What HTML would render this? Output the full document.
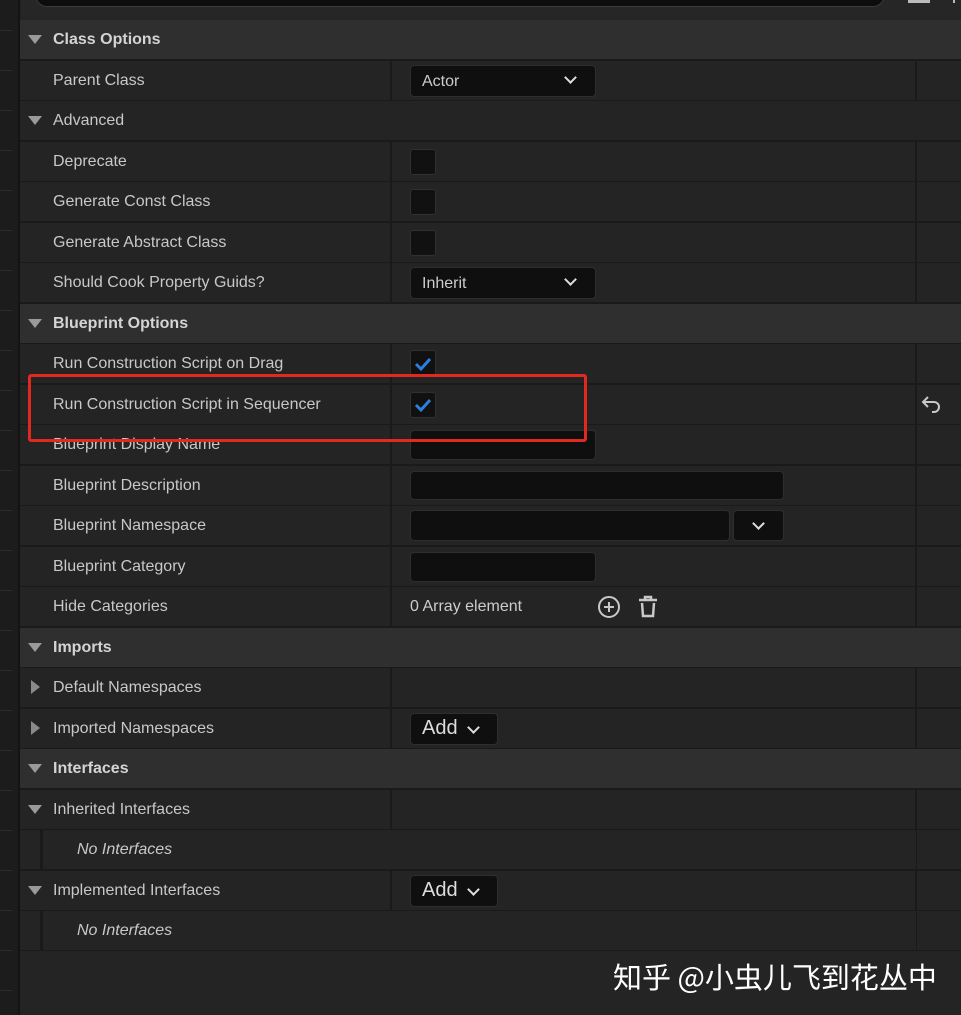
<!DOCTYPE html>
<html><head><meta charset="utf-8"><style>
*{margin:0;padding:0;box-sizing:border-box}
body{width:961px;height:1015px;background:#242424;position:relative;overflow:hidden;font-family:"Liberation Sans","Noto Sans CJK SC",sans-serif;font-size:16px;color:#c8c8c8}
.strip{position:absolute;left:0;top:0;width:20px;height:1015px;background:#1c1c1c;border-right:2px solid #141414}
.tick{position:absolute;left:0;width:12px;height:1px;background:#2c2c2c}
.row{position:absolute;left:20px;width:941px;height:39px;background:#242424}
.hdr{background:#2f2f2f}
.lab{position:absolute;left:33px;top:11px;white-space:nowrap}
.hdr .lab{font-weight:bold;color:#d4d4d4}
.tri{position:absolute;left:8px;top:15px;width:0;height:0;border-left:7px solid transparent;border-right:7px solid transparent;border-top:9px solid #9a9a9a}
.tr{position:absolute;left:11px;top:12px;width:0;height:0;border-top:7px solid transparent;border-bottom:7px solid transparent;border-left:9px solid #8a8a8a}
.d1{position:absolute;left:370px;top:0;width:2px;height:39px;background:#1a1a1a}
.d2{position:absolute;left:895px;top:0;width:2px;height:39px;background:#1a1a1a}
.box{position:absolute;background:#0f0f0f;border:1px solid #2e2e2e;border-radius:4px}
.cb{position:absolute;left:390px;top:7px;width:26px;height:26px;background:#111;border:1px solid #303030;border-radius:3px}
.dd{position:absolute;left:390px;top:4px;width:186px;height:32px;background:#0f0f0f;border:1px solid #2e2e2e;border-radius:4px}
.dd span{position:absolute;left:11px;top:7px;color:#ccc}
.chev{position:absolute;width:9px;height:9px;border-right:2px solid #ddd;border-bottom:2px solid #ddd;transform:rotate(45deg)}
.add{position:absolute;left:390px;top:4px;width:88px;height:32px;background:#0f0f0f;border:1px solid #2e2e2e;border-radius:4px}
.add span{position:absolute;left:11px;top:3px;font-size:20px;color:#ddd}
.sub{position:absolute;left:43px;width:873px;height:39px;background:#242424}
.sub i{position:absolute;left:34px;top:11px;color:#c8c8c8}
</style></head><body>
<div class="strip">
<div class="tick" style="top:30px"></div><div class="tick" style="top:70px"></div><div class="tick" style="top:110px"></div><div class="tick" style="top:150px"></div><div class="tick" style="top:190px"></div><div class="tick" style="top:230px"></div><div class="tick" style="top:270px"></div><div class="tick" style="top:310px"></div><div class="tick" style="top:350px"></div><div class="tick" style="top:390px"></div><div class="tick" style="top:430px"></div><div class="tick" style="top:470px"></div><div class="tick" style="top:510px"></div><div class="tick" style="top:550px"></div><div class="tick" style="top:590px"></div><div class="tick" style="top:630px"></div><div class="tick" style="top:670px"></div><div class="tick" style="top:710px"></div><div class="tick" style="top:750px"></div><div class="tick" style="top:790px"></div><div class="tick" style="top:830px"></div><div class="tick" style="top:870px"></div><div class="tick" style="top:910px"></div><div class="tick" style="top:950px"></div><div class="tick" style="top:990px"></div>
</div>
<div style="position:absolute;left:22px;top:0;width:939px;height:20px;background:#262626"></div>
<div style="position:absolute;left:35px;top:-20px;width:850px;height:27px;background:#0d0d0d;border:1px solid #3a3a3a;border-radius:12px"></div>
<div style="position:absolute;left:908px;top:0;width:22px;height:3px;background:#bbb"></div>
<div style="position:absolute;left:953px;top:0;width:2px;height:3px;background:#bbb"></div>
<div style="position:absolute;left:20px;top:20px;width:941px;height:931px;background:#1a1a1a"></div>

<div class="row hdr" style="top:20px"><div class="tri"></div><div class="lab">Class Options</div></div>
<div class="row" style="top:61px"><div class="lab">Parent Class</div><div class="d1"></div><div class="d2"></div><div class="dd"><span>Actor</span><div class="chev" style="left:155px;top:7px"></div></div></div>
<div class="row" style="top:101px"><div class="tri"></div><div class="lab">Advanced</div></div>
<div class="row" style="top:142px"><div class="lab">Deprecate</div><div class="d1"></div><div class="d2"></div><div class="cb"></div></div>
<div class="row" style="top:182px"><div class="lab">Generate Const Class</div><div class="d1"></div><div class="d2"></div><div class="cb"></div></div>
<div class="row" style="top:223px"><div class="lab">Generate Abstract Class</div><div class="d1"></div><div class="d2"></div><div class="cb"></div></div>
<div class="row" style="top:263px"><div class="lab">Should Cook Property Guids?</div><div class="d1"></div><div class="d2"></div><div class="dd"><span>Inherit</span><div class="chev" style="left:155px;top:7px"></div></div></div>
<div class="row hdr" style="top:304px"><div class="tri"></div><div class="lab">Blueprint Options</div></div>
<div class="row" style="top:344px"><div class="lab">Run Construction Script on Drag</div><div class="d1"></div><div class="d2"></div><div class="cb" style="top:6px"><svg width="24" height="24" style="position:absolute;left:0;top:1px"><path d="M5 12 L10 17 L19 7" stroke="#2a7fe0" stroke-width="3" fill="none"/></svg></div></div>
<div class="row" style="top:385px"><div class="lab">Run Construction Script in Sequencer</div><div class="d1"></div><div class="d2"></div><div class="cb"><svg width="24" height="24" style="position:absolute;left:0;top:0"><path d="M5 12 L10 17 L19 7" stroke="#2a7fe0" stroke-width="3" fill="none"/></svg></div>
<svg width="22" height="20" style="position:absolute;left:901px;top:9px"><path d="M7 3 L2 8 L7 13 M2 8 H13 A5 5 0 0 1 13 18 H11" stroke="#c8c8c8" stroke-width="2" fill="none"/></svg></div>
<div class="row" style="top:425px"><div class="lab">Blueprint Display Name</div><div class="d1"></div><div class="d2"></div><div class="box" style="left:390px;top:5px;width:186px;height:30px"></div></div>
<div class="row" style="top:466px"><div class="lab">Blueprint Description</div><div class="d1"></div><div class="d2"></div><div class="box" style="left:390px;top:5px;width:374px;height:29px"></div></div>
<div class="row" style="top:506px"><div class="lab">Blueprint Namespace</div><div class="d1"></div><div class="d2"></div><div class="box" style="left:390px;top:4px;width:320px;height:31px"></div><div class="box" style="left:713px;top:4px;width:51px;height:31px"><div class="chev" style="left:20px;top:8px"></div></div></div>
<div class="row" style="top:547px"><div class="lab">Blueprint Category</div><div class="d1"></div><div class="d2"></div><div class="box" style="left:390px;top:5px;width:186px;height:30px"></div></div>
<div class="row" style="top:587px"><div class="lab">Hide Categories</div><div class="d1"></div><div class="d2"></div><div style="position:absolute;left:390px;top:11px;color:#ccc">0 Array element</div>
<svg width="26" height="26" style="position:absolute;left:576px;top:7px"><circle cx="13" cy="13" r="10" stroke="#c8c8c8" stroke-width="2" fill="none"/><path d="M13 8 V18 M8 13 H18" stroke="#c8c8c8" stroke-width="2"/></svg>
<svg width="24" height="26" style="position:absolute;left:616px;top:6px"><path d="M3 7 H21 M9 7 V4 H15 V7 M6 10 L7 23 H17 L18 10" stroke="#c8c8c8" stroke-width="2.5" fill="none"/></svg></div>
<div class="row hdr" style="top:628px"><div class="tri"></div><div class="lab">Imports</div></div>
<div class="row" style="top:668px"><div class="tr"></div><div class="lab">Default Namespaces</div><div class="d1"></div><div class="d2"></div></div>
<div class="row" style="top:709px"><div class="tr"></div><div class="lab">Imported Namespaces</div><div class="d1"></div><div class="d2"></div><div class="add"><span>Add</span><div class="chev" style="left:58px;top:9px"></div></div></div>
<div class="row hdr" style="top:749px"><div class="tri"></div><div class="lab">Interfaces</div></div>
<div class="row" style="top:790px"><div class="tri"></div><div class="lab">Inherited Interfaces</div><div class="d1"></div><div class="d2"></div></div>
<div class="row" style="top:830px"><div style="position:absolute;left:20px;top:0;width:3px;height:39px;background:#1a1a1a"></div><div class="d2"></div></div>
<div class="sub" style="top:830px"><i>No Interfaces</i></div>
<div class="row" style="top:871px"><div class="tri"></div><div class="lab">Implemented Interfaces</div><div class="d1"></div><div class="d2"></div><div class="add"><span>Add</span><div class="chev" style="left:58px;top:9px"></div></div></div>
<div class="row" style="top:911px"><div style="position:absolute;left:20px;top:0;width:3px;height:39px;background:#1a1a1a"></div><div class="d2"></div></div>
<div class="sub" style="top:911px"><i>No Interfaces</i></div>

<div style="position:absolute;left:28px;top:374px;width:559px;height:68px;border:3px solid #e0291f;border-radius:3px"></div>
<div style="position:absolute;left:613px;top:955px;font-size:29px;color:#fff;font-family:'Noto Sans CJK SC',sans-serif;white-space:nowrap">知乎 @小虫儿飞到花丛中</div>
</body></html>
